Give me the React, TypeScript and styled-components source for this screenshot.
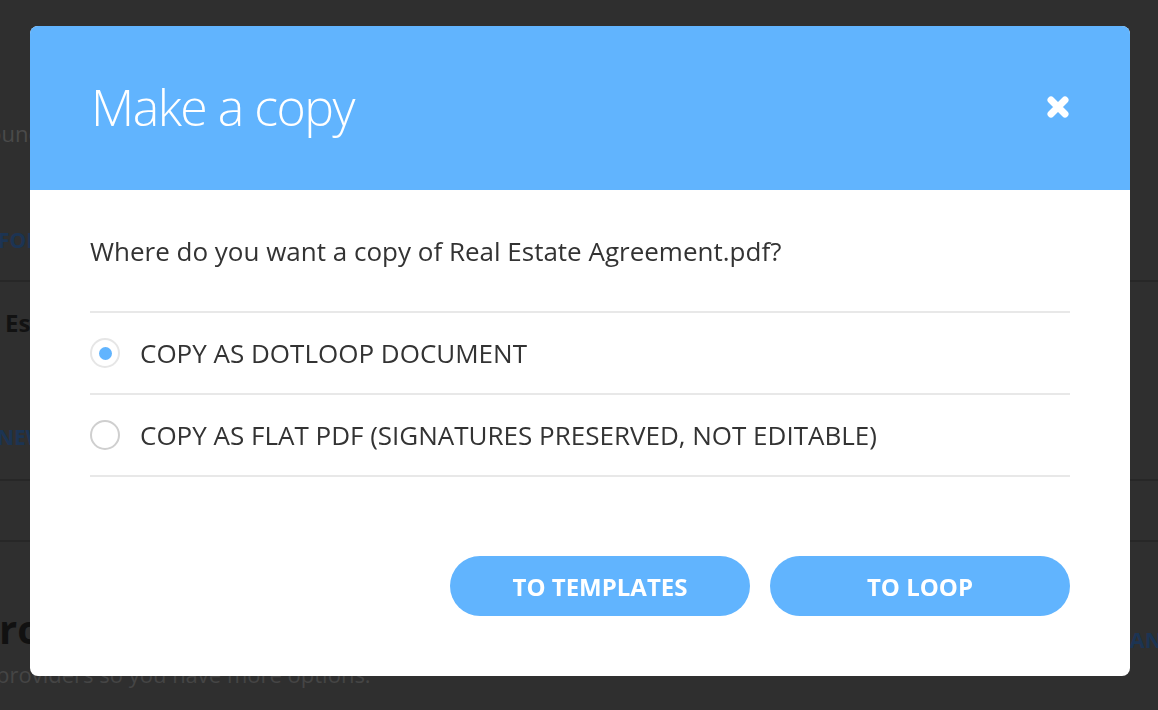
import React, { useState } from "react";
import styled, { createGlobalStyle } from "styled-components";

const GlobalStyle = createGlobalStyle`
  html, body {
    margin: 0;
    padding: 0;
    background: #2f2f2f;
    font-family: "Open Sans", "Liberation Sans", sans-serif;
  }
  * { box-sizing: border-box; }
`;

const BLUE = "#61b4fe";

/* ---------- dimmed page behind the modal ---------- */
const Page = styled.div`
  position: relative;
  width: 1158px;
  height: 710px;
  overflow: hidden;
  background: #2f2f2f;
  display: flex;
  flex-direction: column;
`;

const PageText = styled.div<{ $indent: number; $top: number; $size: number; $weight: number; $color: string; $right?: number }>`
  margin-top: ${(p) => p.$top}px;
  margin-left: ${(p) => p.$indent}px;
  margin-right: ${(p) => p.$right ?? 0}px;
  font-size: ${(p) => p.$size}px;
  font-weight: ${(p) => p.$weight};
  color: ${(p) => p.$color};
  line-height: 1.2;
  white-space: nowrap;
  flex-shrink: 0;
`;

const PageRule = styled.div<{ $top: number }>`
  margin-top: ${(p) => p.$top}px;
  height: 2px;
  background: #272727;
  flex-shrink: 0;
`;

const PageRow = styled.div<{ $top: number }>`
  margin-top: ${(p) => p.$top}px;
  display: flex;
  justify-content: space-between;
  align-items: flex-end;
  flex-shrink: 0;
`;

/* ---------- modal ---------- */
const Backdrop = styled.div`
  position: fixed;
  inset: 0;
  display: flex;
  align-items: flex-start;
  justify-content: flex-start;
  padding: 26px 0 0 30px;
`;

const Dialog = styled.div`
  width: 1100px;
  background: #ffffff;
  border-radius: 8px;
  overflow: hidden;
  display: flex;
  flex-direction: column;
`;

const Header = styled.div`
  height: 164px;
  background: ${BLUE};
  display: flex;
  align-items: center;
  justify-content: space-between;
  padding: 0 60px 2px 61px;
`;

const Title = styled.h1`
  margin: 0;
  font-family: "Open Sans", "Liberation Sans", sans-serif;
  font-weight: 300;
  font-size: 50px;
  letter-spacing: -1.5px;
  color: #ffffff;
`;

const CloseButton = styled.button`
  width: 26px;
  height: 26px;
  padding: 0;
  border: 0;
  background: transparent;
  cursor: pointer;
  display: flex;
  margin-right: -1px;
`;

const Body = styled.div`
  padding: 44px 60px 60px;
  display: flex;
  flex-direction: column;
`;

const Question = styled.p`
  margin: 0 0 43px;
  font-size: 26px;
  line-height: 34px;
  color: #333333;
`;

const OptionList = styled.div`
  border-bottom: 2px solid #e8e8e8;
  display: flex;
  flex-direction: column;
`;

const OptionRow = styled.label`
  height: 82px;
  border-top: 2px solid #e8e8e8;
  display: flex;
  align-items: center;
  gap: 20px;
  cursor: pointer;
`;

const Radio = styled.span<{ $checked: boolean }>`
  width: 30px;
  height: 30px;
  border-radius: 50%;
  border: 2px solid ${(p) => (p.$checked ? "#e6e6e6" : "#cfcfcf")};
  display: flex;
  align-items: center;
  justify-content: center;
  flex-shrink: 0;
  &::after {
    content: "";
    width: 13px;
    height: 13px;
    border-radius: 50%;
    background: ${BLUE};
    display: ${(p) => (p.$checked ? "block" : "none")};
  }
`;

const OptionText = styled.span`
  font-size: 26px;
  color: #333333;
  text-transform: uppercase;
`;

const Actions = styled.div`
  margin-top: 79px;
  display: flex;
  justify-content: flex-end;
  gap: 20px;
`;

const PillButton = styled.button`
  width: 300px;
  height: 60px;
  border: 0;
  border-radius: 30px;
  background: ${BLUE};
  color: #ffffff;
  font-family: "Open Sans", "Liberation Sans", sans-serif;
  font-weight: 700;
  font-size: 24px;
  text-transform: uppercase;
  cursor: pointer;
  padding: 0;
`;

const options = [
  "Copy as dotloop document",
  "Copy as flat PDF (signatures preserved, not editable)",
];

export default function App() {
  const [selected, setSelected] = useState(0);
  return (
    <>
      <GlobalStyle />
      <Page>
        <PageText $indent={-23} $top={120} $size={22} $weight={400} $color="#4a4a4a">
          Found in your loops
        </PageText>
        <PageText $indent={-2} $top={82} $size={21} $weight={700} $color="#1c3453">
          FOLDERS
        </PageText>
        <PageRule $top={26} />
        <PageText $indent={5} $top={27} $size={24} $weight={700} $color="#121212">
          Estate Agreement
        </PageText>
        <PageText $indent={-3} $top={88} $size={21} $weight={700} $color="#1c3453">
          NEW
        </PageText>
        <PageRule $top={28} />
        <PageRule $top={59} />
        <PageRow $top={63}>
          <PageText $indent={-26} $top={0} $size={40} $weight={700} $color="#111111">
            Providers
          </PageText>
          <PageText $indent={0} $top={0} $right={-48} $size={22} $weight={700} $color="#1c3453">
            MANAGE
          </PageText>
        </PageRow>
        <PageText $indent={-4} $top={8} $size={22} $weight={400} $color="#454545">
          providers so you have more options.
        </PageText>
      </Page>
      <Backdrop>
        <Dialog role="dialog" aria-label="Make a copy">
          <Header>
            <Title>Make a copy</Title>
            <CloseButton aria-label="Close">
              <svg width="26" height="26" viewBox="0 0 26 26">
                <path d="M6 6 L20 20 M20 6 L6 20" stroke="#ffffff" strokeWidth="7" strokeLinecap="round" fill="none" />
              </svg>
            </CloseButton>
          </Header>
          <Body>
            <Question>Where do you want a copy of Real Estate Agreement.pdf?</Question>
            <OptionList>
              {options.map((o, i) => (
                <OptionRow key={o} onClick={() => setSelected(i)}>
                  <Radio $checked={selected === i} />
                  <OptionText>{o}</OptionText>
                </OptionRow>
              ))}
            </OptionList>
            <Actions>
              <PillButton>To Templates</PillButton>
              <PillButton>To Loop</PillButton>
            </Actions>
          </Body>
        </Dialog>
      </Backdrop>
    </>
  );
}
